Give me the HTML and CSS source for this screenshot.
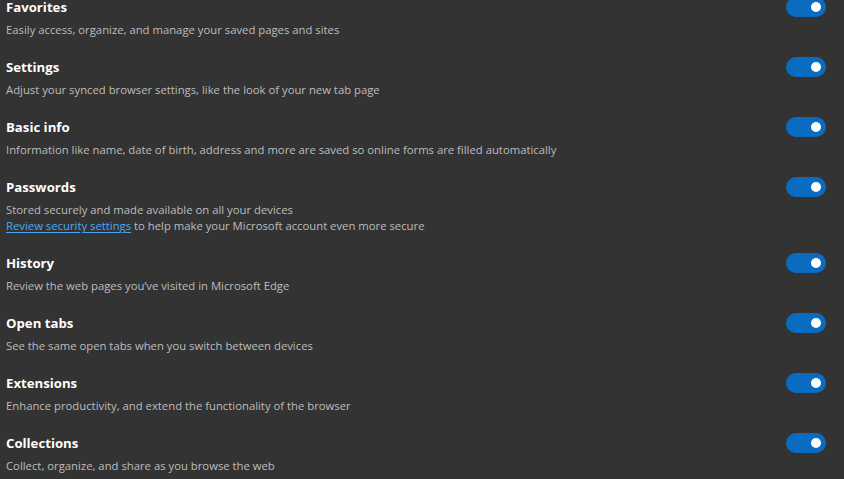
FILE: index.html
```html
<!DOCTYPE html>
<html lang="en">
<head>
<meta charset="utf-8">
<title>Sync</title>
<link rel="stylesheet" href="styles.css">
</head>
<body>
<div class="list">
  <div class="row">
    <div class="text">
      <div class="title">Favorites</div>
      <div class="desc">Easily access, organize, and manage your saved pages and sites</div>
    </div>
    <div class="toggle"><span class="knob"></span></div>
  </div>
  <div class="row">
    <div class="text">
      <div class="title">Settings</div>
      <div class="desc">Adjust your synced browser settings, like the look of your new tab page</div>
    </div>
    <div class="toggle"><span class="knob"></span></div>
  </div>
  <div class="row">
    <div class="text">
      <div class="title">Basic info</div>
      <div class="desc">Information like name, date of birth, address and more are saved so online forms are filled automatically</div>
    </div>
    <div class="toggle"><span class="knob"></span></div>
  </div>
  <div class="row">
    <div class="text">
      <div class="title">Passwords</div>
      <div class="desc">Stored securely and made available on all your devices</div>
      <div class="desc"><a class="link" href="#">Review security settings</a> to help make your Microsoft account even more secure</div>
    </div>
    <div class="toggle"><span class="knob"></span></div>
  </div>
  <div class="row">
    <div class="text">
      <div class="title">History</div>
      <div class="desc">Review the web pages you’ve visited in Microsoft Edge</div>
    </div>
    <div class="toggle"><span class="knob"></span></div>
  </div>
  <div class="row">
    <div class="text">
      <div class="title">Open tabs</div>
      <div class="desc">See the same open tabs when you switch between devices</div>
    </div>
    <div class="toggle"><span class="knob"></span></div>
  </div>
  <div class="row">
    <div class="text">
      <div class="title">Extensions</div>
      <div class="desc">Enhance productivity, and extend the functionality of the browser</div>
    </div>
    <div class="toggle"><span class="knob"></span></div>
  </div>
  <div class="row">
    <div class="text">
      <div class="title">Collections</div>
      <div class="desc">Collect, organize, and share as you browse the web</div>
    </div>
    <div class="toggle"><span class="knob"></span></div>
  </div>
</div>
</body>
</html>
```
FILE: styles.css
```css
html, body {
  margin: 0;
  padding: 0;
  background: #333333;
  overflow: hidden;
}
body {
  font-family: "Open Sans", "Noto Sans", sans-serif;
  color: #ffffff;
}
.list {
  display: flex;
  flex-direction: column;
  gap: 19px;
  margin-top: -3px;
  padding: 0 18px 0 6px;
}
.row {
  display: flex;
  align-items: flex-start;
  justify-content: space-between;
}
.text {
  display: flex;
  flex-direction: column;
}
.title {
  font-size: 13.2px;
  font-weight: 700;
  line-height: 20px;
  margin-bottom: 5px;
  color: #ffffff;
}
.desc {
  font-size: 11.3px;
  line-height: 16px;
  color: #bdbdbd;
}
.link {
  color: #4ca8f5;
  text-decoration: underline;
  text-underline-offset: 2px;
}
.toggle {
  width: 40px;
  height: 20px;
  border-radius: 10px;
  background: #0a6cc0;
  display: flex;
  align-items: center;
  justify-content: flex-end;
  padding-right: 5px;
  box-sizing: border-box;
  flex-shrink: 0;
}
.knob {
  width: 10px;
  height: 10px;
  border-radius: 50%;
  background: #ffffff;
}
```
